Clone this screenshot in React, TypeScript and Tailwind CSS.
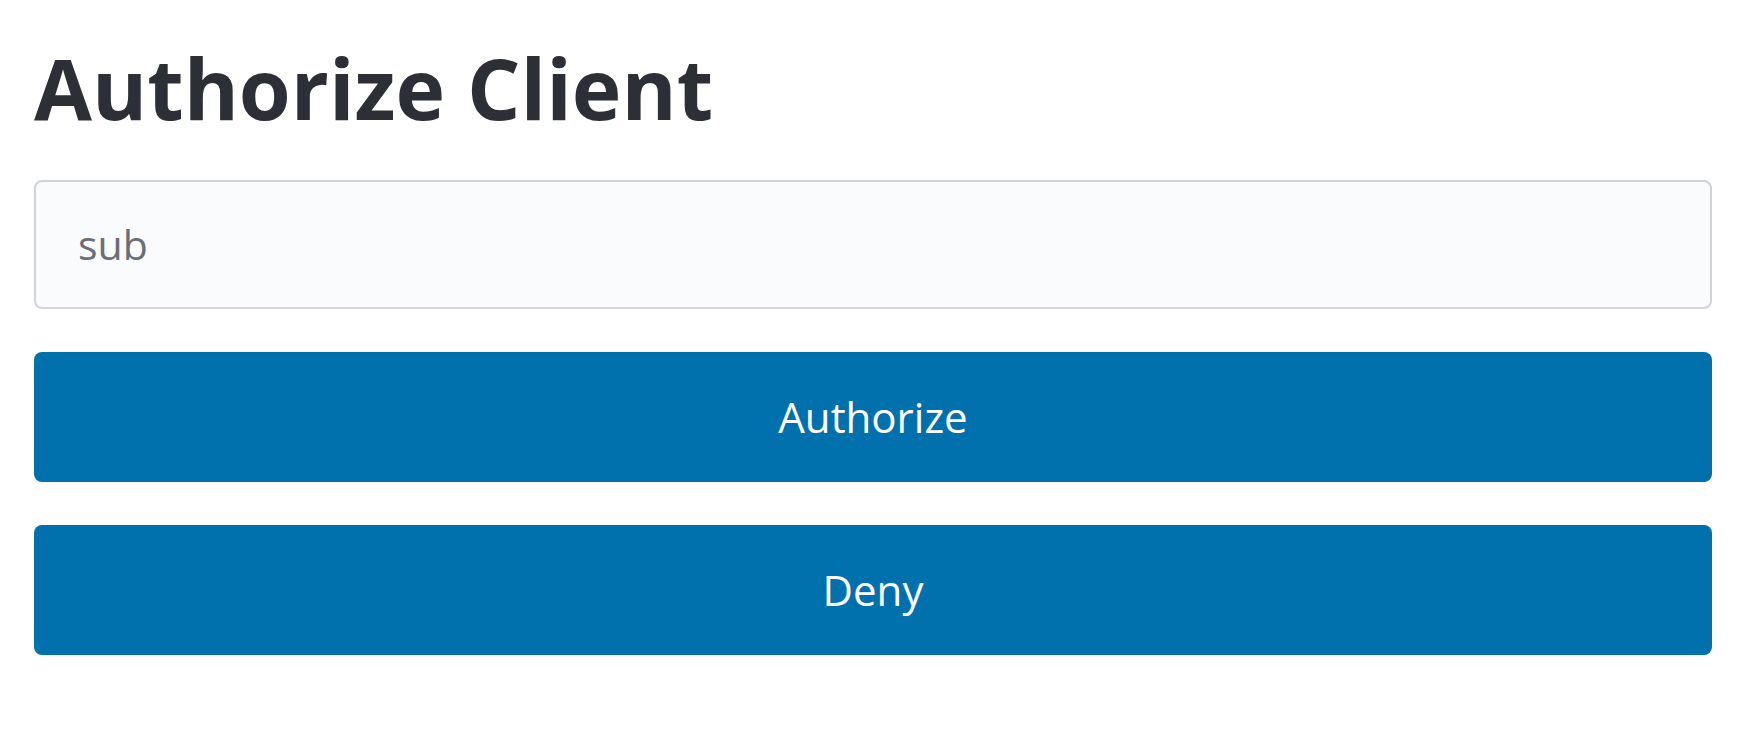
export default function App() {
  return (
    <div className="min-h-screen bg-white px-[34px] pt-[38px] font-['Open_Sans',sans-serif]">
      <h1 className="mb-[41px] text-[84px] font-bold leading-[1.2] text-[#2d2f36]">Authorize Client</h1>
      <form className="flex flex-col gap-[43px]" onSubmit={(e) => e.preventDefault()}>
        <input
          type="text"
          placeholder="sub"
          className="h-[129px] w-full rounded-[8px] border-2 border-[#d1d3d8] bg-[#fafbfc] pl-[42px] text-[41px] text-[#2d2f36] outline-none placeholder:text-[#6b6e76]"
        />
        <button type="submit" className="h-[130px] w-full rounded-[8px] bg-[#0071ad] text-[42px] text-white">
          Authorize
        </button>
        <button type="button" className="h-[130px] w-full rounded-[8px] bg-[#0071ad] text-[42px] text-white">
          Deny
        </button>
      </form>
    </div>
  )
}
